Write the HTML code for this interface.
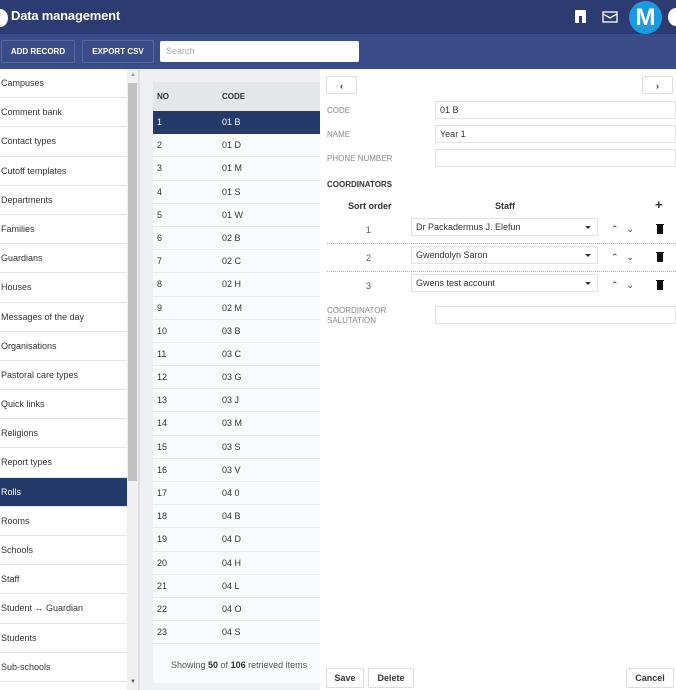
<!DOCTYPE html>
<html><head><style>
*{box-sizing:border-box;margin:0;padding:0}
body{width:676px;height:690px;overflow:hidden;font-family:"Liberation Sans",Arial,sans-serif;font-size:9px;color:#333;background:#fff;position:relative}
.hdr{position:absolute;left:0;top:0;width:676px;height:34px;background:#2c3c73}
.tb{position:absolute;left:0;top:34px;width:676px;height:35px;background:#3a4d88}
.btn{position:absolute;top:6px;height:23px;border:1px solid #55699f;border-radius:2px;color:#fff;font-weight:bold;font-size:8px;line-height:21px;text-align:center}
.side{position:absolute;left:0;top:69px;width:127px}
.side div{height:29.2px;line-height:29px;padding-left:1px;border-bottom:1px solid #e3e5e8;font-size:9px;color:#333}
.side .act{background:#233a6a;color:#fff}
.sb{position:absolute;left:127px;top:69px;width:11px;height:621px;background:#f0f0f0}
.gray{position:absolute;left:138px;top:69px;width:182px;height:621px;background:#eef0f3;border-left:2px solid #dcdfe3}
.card{position:absolute;left:153px;top:82px;width:167px;height:601px;background:#f9fafb;border-radius:3px 0 0 3px}
.th{height:29px;background:#e4e6e9;font-weight:bold;font-size:8px;line-height:29px}
.r{height:23.2px;line-height:22px;border-bottom:1px solid #e8eaed;font-size:9px}
.c1{position:absolute;left:4px}.c2{position:absolute;left:69px}
.r,.th{position:relative}
.lbl{position:absolute;left:327px;font-size:8px;color:#888}
.inp{position:absolute;left:435px;width:241px;height:18px;border:1px solid #e2e2e2;font-size:9px;line-height:16px;padding-left:4px}
.sel{position:absolute;left:411px;width:187px;height:18px;border:1px solid #e2e2e2;font-size:9px;line-height:16px;padding-left:4px}
.sel:after{content:"";position:absolute;right:6px;top:7px;border:3px solid transparent;border-top:3px solid #333}
.dash{position:absolute;left:327px;width:349px;border-top:1px dotted #aaa}
.num{position:absolute;left:366px;font-size:9px;color:#555}
.arr{position:absolute;left:611px;font-size:9px;color:#333;letter-spacing:8px}
.trash{position:absolute;left:657px;width:6px;height:9px;background:#111;border-top:2px solid #111}
.trash:before{content:"";position:absolute;left:-1px;top:-3px;width:8px;height:1px;background:#111}
.pb{position:absolute;height:20px;border:1px solid #ddd;border-radius:2px;font-weight:bold;font-size:9px;line-height:18px;text-align:center}
</style></head><body>
<div class="hdr">
 <div style="position:absolute;left:-8px;top:9px;width:16px;height:18px;border-radius:50%;background:#fff"></div>
 <div style="position:absolute;left:11px;top:8px;color:#fff;font-weight:bold;font-size:13px;letter-spacing:-0.2px">Data management</div>
 <div style="position:absolute;left:575px;top:10px;width:11px;height:13px;background:#fff;border-radius:1px"><div style="position:absolute;left:4px;top:6px;width:3px;height:7px;background:#2c3c73"></div></div>
 <svg style="position:absolute;left:602px;top:11px" width="16" height="12" viewBox="0 0 16 12"><rect x="1" y="1" width="14" height="10" fill="none" stroke="#fff" stroke-width="1.3"/><path d="M1 3l7 4 7-4M5 5l3 2 3-2" fill="none" stroke="#fff" stroke-width="1.2"/></svg>
 <div style="position:absolute;left:629px;top:1px;width:33px;height:33px;border-radius:50%;background:#1a9be0;color:#fff;font-weight:bold;font-size:24px;text-align:center;line-height:33px">M</div>
 <div style="position:absolute;left:668px;top:8px;width:16px;height:18px;border-radius:50%;background:#fff"></div>
</div>
<div class="tb">
 <div class="btn" style="left:1px;width:74px">ADD RECORD</div>
 <div class="btn" style="left:82px;width:72px">EXPORT CSV</div>
 <div style="position:absolute;left:160px;top:7px;width:199px;height:21px;background:#fff;border-radius:2px;color:#aaa;font-size:9px;line-height:21px;padding-left:6px">Search</div>
</div>
<div class="side">
<div>Campuses</div><div>Comment bank</div><div>Contact types</div><div>Cutoff templates</div><div>Departments</div><div>Families</div><div>Guardians</div><div>Houses</div><div>Messages of the day</div><div>Organisations</div><div>Pastoral care types</div><div>Quick links</div><div>Religions</div><div>Report types</div><div class="act">Rolls</div><div>Rooms</div><div>Schools</div><div>Staff</div><div>Student ↔ Guardian</div><div>Students</div><div>Sub-schools</div>
</div>
<div class="sb"><div style="position:absolute;left:1px;top:14px;width:9px;height:398px;background:#c1c1c1"></div>
<div style="position:absolute;left:3px;top:3px;color:#999;font-size:6px">▲</div><div style="position:absolute;left:3px;top:610px;color:#555;font-size:6px">▼</div></div>
<div class="gray"></div>
<div class="card">
 <div class="th"><span class="c1">NO</span><span class="c2">CODE</span></div>
 <div class="r" style="background:#233a6a;color:#fff;border:0"><span class="c1">1</span><span class="c2">01 B</span></div>
 <div class="r"><span class="c1">2</span><span class="c2">01 D</span></div>
 <div class="r"><span class="c1">3</span><span class="c2">01 M</span></div>
 <div class="r"><span class="c1">4</span><span class="c2">01 S</span></div>
 <div class="r"><span class="c1">5</span><span class="c2">01 W</span></div>
 <div class="r"><span class="c1">6</span><span class="c2">02 B</span></div>
 <div class="r"><span class="c1">7</span><span class="c2">02 C</span></div>
 <div class="r"><span class="c1">8</span><span class="c2">02 H</span></div>
 <div class="r"><span class="c1">9</span><span class="c2">02 M</span></div>
 <div class="r"><span class="c1">10</span><span class="c2">03 B</span></div>
 <div class="r"><span class="c1">11</span><span class="c2">03 C</span></div>
 <div class="r"><span class="c1">12</span><span class="c2">03 G</span></div>
 <div class="r"><span class="c1">13</span><span class="c2">03 J</span></div>
 <div class="r"><span class="c1">14</span><span class="c2">03 M</span></div>
 <div class="r"><span class="c1">15</span><span class="c2">03 S</span></div>
 <div class="r"><span class="c1">16</span><span class="c2">03 V</span></div>
 <div class="r"><span class="c1">17</span><span class="c2">04 0</span></div>
 <div class="r"><span class="c1">18</span><span class="c2">04 B</span></div>
 <div class="r"><span class="c1">19</span><span class="c2">04 D</span></div>
 <div class="r"><span class="c1">20</span><span class="c2">04 H</span></div>
 <div class="r"><span class="c1">21</span><span class="c2">04 L</span></div>
 <div class="r"><span class="c1">22</span><span class="c2">04 O</span></div>
 <div class="r"><span class="c1">23</span><span class="c2">04 S</span></div>
 <div style="position:absolute;left:18px;top:578px;font-size:9px;color:#555">Showing <b style="color:#333">50</b> of <b style="color:#333">106</b> retrieved items</div>
</div>
<div style="position:absolute;left:320px;top:69px;width:356px;height:621px;background:#fff"></div>
<div class="pb" style="left:326px;top:76px;width:31px;height:18px">‹</div>
<div class="pb" style="left:642px;top:76px;width:31px;height:18px">›</div>
<div class="lbl" style="top:106px">CODE</div><div class="inp" style="top:101px">01 B</div>
<div class="lbl" style="top:130px">NAME</div><div class="inp" style="top:125px">Year 1</div>
<div class="lbl" style="top:154px">PHONE NUMBER</div><div class="inp" style="top:149px"></div>
<div style="position:absolute;left:327px;top:180px;font-weight:bold;font-size:8px;color:#333">COORDINATORS</div>
<div style="position:absolute;left:348px;top:201px;font-weight:bold;font-size:9px">Sort order</div>
<div style="position:absolute;left:495px;top:201px;font-weight:bold;font-size:9px">Staff</div>
<div style="position:absolute;left:655px;top:197px;font-size:13px;font-weight:bold">+</div>
<div class="num" style="top:225px">1</div><div class="sel" style="top:218px">Dr Packadermus J. Elefun</div><div class="arr" style="top:224px">⌃⌄</div><div class="trash" style="top:225px"></div>
<div class="dash" style="top:243px"></div>
<div class="num" style="top:253px">2</div><div class="sel" style="top:246px">Gwendolyn Saron</div><div class="arr" style="top:252px">⌃⌄</div><div class="trash" style="top:253px"></div>
<div class="dash" style="top:271px"></div>
<div class="num" style="top:281px">3</div><div class="sel" style="top:274px">Gwens test account</div><div class="arr" style="top:280px">⌃⌄</div><div class="trash" style="top:281px"></div>
<div class="lbl" style="top:306px;line-height:10px">COORDINATOR<br>SALUTATION</div><div class="inp" style="top:306px"></div>
<div class="pb" style="left:326px;top:668px;width:38px">Save</div>
<div class="pb" style="left:368px;top:668px;width:46px">Delete</div>
<div class="pb" style="left:626px;top:668px;width:48px">Cancel</div>
</body></html>
